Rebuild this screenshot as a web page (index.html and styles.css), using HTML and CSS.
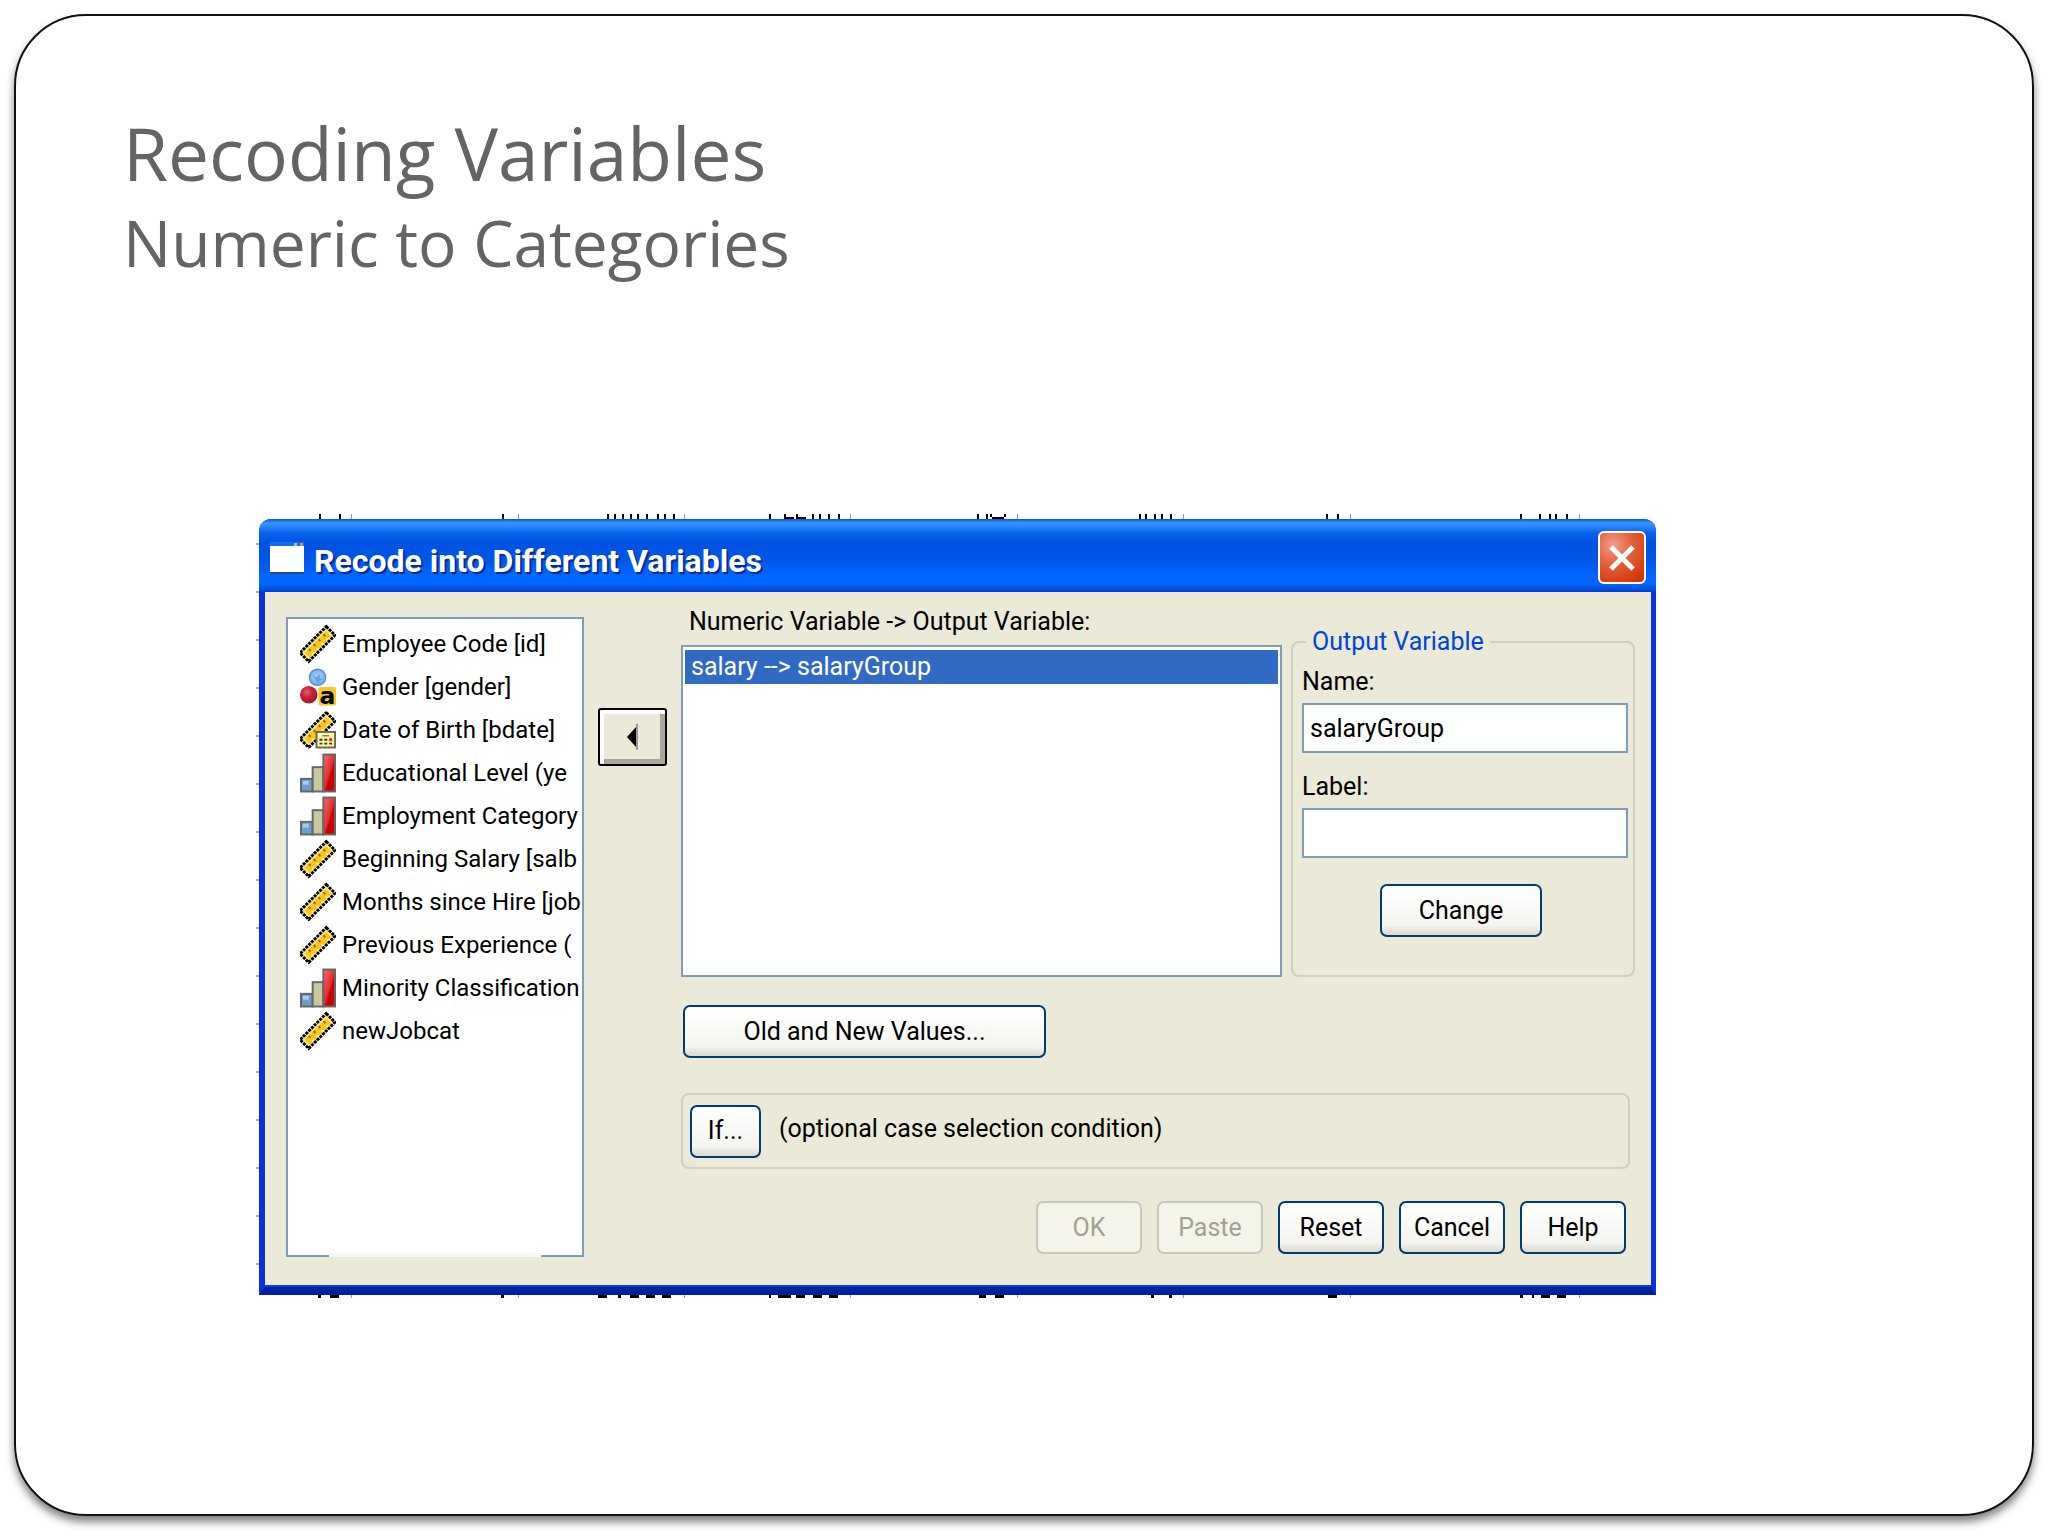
FILE: index.html
```
<!DOCTYPE html>
<html lang="en">
<head>
    <meta charset="UTF-8">
    <meta name="viewport" content="width=device-width, initial-scale=1.0">
    <title>Recoding Variables</title>
    <link rel="stylesheet" href="styles.css">
</head>
<body>

<!-- icon shapes used by the variable list -->
<svg class="defs" aria-hidden="true">
    <linearGradient id="redBar" x1="0" y1="0" x2="1" y2="1">
        <stop offset="0" stop-color="#ff6a6a"/>
        <stop offset="0.5" stop-color="#e03030"/>
        <stop offset="0.6" stop-color="#c80000"/>
        <stop offset="1" stop-color="#d00808"/>
    </linearGradient>
    <radialGradient id="redBall" cx="0.4" cy="0.35" r="0.65">
        <stop offset="0" stop-color="#e86070"/>
        <stop offset="0.5" stop-color="#c42035"/>
        <stop offset="1" stop-color="#a01830"/>
    </radialGradient>
    <radialGradient id="blueBall" cx="0.5" cy="0.5" r="0.5">
        <stop offset="0" stop-color="#a4d4ff"/>
        <stop offset="0.7" stop-color="#84bcf8"/>
        <stop offset="1" stop-color="#4a7cc8"/>
    </radialGradient>
    <symbol id="scale" viewBox="0 0 37 38">
        <path d="M27 1L36 10L9 37L0 28Z" fill="#f4e48a"/>
        <path d="M27 6L32 11L10 33L5 28Z" fill="#fcc414"/>
        <path d="M24 9l2 2M19 14l2 2M14 19l2 2M9 24l2 2" stroke="#8a7030" stroke-width="2"/>
        <path d="M27 14h3M22 19h3M17 24h3M12 29h3" stroke="#fff4b0" stroke-width="2"/>
        <path d="M27 1L36 10L9 37L0 28Z" fill="none" stroke="#000" stroke-width="3" stroke-dasharray="3 1"/>
    </symbol>
    <symbol id="date" viewBox="0 0 37 38">
        <use href="#scale" width="37" height="38"/>
        <rect x="17" y="21" width="19" height="16" fill="#fff8a0" stroke="#6a6a5a" stroke-width="2"/>
        <path d="M23 25h7" stroke="#444" stroke-width="1"/>
        <path d="M20 29h3M25 29h3M20 33h3M25 33h3M30 33h3" stroke="#333" stroke-width="2"/>
        <path d="M30 29h3" stroke="#e02010" stroke-width="3"/>
    </symbol>
    <symbol id="ordinal" viewBox="0 0 37 40">
        <rect x="1" y="26" width="12" height="13" fill="#6c9fd0" stroke="#666" stroke-width="2"/>
        <path d="M3 28h6v4H3z" fill="#a8cdf0"/>
        <rect x="13" y="14" width="11" height="25" fill="#c8c89c" stroke="#666" stroke-width="2"/>
        <rect x="24" y="1" width="12" height="38" fill="url(#redBar)" stroke="#666" stroke-width="2"/>
    </symbol>
</svg>

<main class="slide">
    <header class="heading">
        <h1>Recoding Variables</h1>
        <h2>Numeric to Categories</h2>
    </header>

    <div class="stage">
        <section class="dialog" aria-labelledby="dialogTitle">
            <!-- rows of the data sheet that stick out behind the window -->
            <svg class="sheet sheet-top" viewBox="259 0 1397 5" preserveAspectRatio="none" aria-hidden="true">
                <path d="M319 0h2v5h-2zM339 0h2v5h-2zM502 0h2v5h-2zM607 0h2v5h-2zM614 0h2v5h-2zM622 0h2v5h-2zM630 0h2v5h-2zM637 0h2v5h-2zM646 0h2v5h-2zM657 0h2v5h-2zM664 0h2v5h-2zM673 0h2v5h-2zM769 0h2v5h-2zM784 0h2v3h8v2h-10zM796 0h2v3h8v2h-10zM812 0h2v5h-2zM819 0h2v5h-2zM828 0h2v5h-2zM838 0h2v5h-2zM977 0h2v5h-2zM986 0h2v5h-2zM992 3h12v2h-12zM990 0h2v3h-2zM1004 0h2v3h-2zM1139 0h2v5h-2zM1145 0h2v5h-2zM1154 0h2v5h-2zM1161 0h2v5h-2zM1170 0h2v5h-2zM1326 0h2v5h-2zM1337 0h2v5h-2zM1520 0h2v5h-2zM1539 0h2v5h-2zM1549 0h2v5h-2zM1555 0h2v5h-2zM1566 0h2v5h-2z"/>
                <path fill="#999" d="M351 0h1v5h-1zM518 0h1v5h-1zM684 0h1v5h-1zM850 0h1v5h-1zM1017 0h1v5h-1zM1183 0h1v5h-1zM1350 0h1v5h-1zM1579 0h1v5h-1z"/>
            </svg>
            <svg class="sheet sheet-bottom" viewBox="259 0 1397 3" preserveAspectRatio="none" aria-hidden="true">
                <path d="M318 0h3v3h-3zM330 0h9v3h-9zM501 0h3v3h-3zM598 0h9v3h-9zM618 0h3v3h-3zM630 0h9v3h-9zM646 0h9v3h-9zM662 0h9v3h-9zM769 0h2v3h-2zM778 0h13v3h-13zM796 0h9v3h-9zM813 0h9v3h-9zM829 0h9v3h-9zM979 0h7v3h-7zM995 0h9v3h-9zM1151 0h3v3h-3zM1169 0h3v3h-3zM1328 0h9v3h-9zM1520 0h3v3h-3zM1532 0h2v3h-2zM1541 0h9v3h-9zM1557 0h9v3h-9z"/>
                <path fill="#99b" d="M351 0h1v3h-1zM518 0h1v3h-1zM684 0h1v3h-1zM850 0h1v3h-1zM1017 0h1v3h-1zM1183 0h1v3h-1zM1350 0h1v3h-1zM1579 0h1v3h-1z"/>
            </svg>

            <div class="titlebar">
                <svg class="app-icon" viewBox="0 0 34 32" aria-hidden="true">
                    <path fill="#1470e0" d="M0 0h34v4H0z"/>
                    <path fill="#f08040" d="M30 1h3v3h-3z"/>
                    <path fill="#8cc0f8" d="M24 1h3v3h-3z"/>
                    <path fill="#fff" d="M0 4h34v26H0z"/>
                    <path fill="#234a8c" d="M1 30h33v2H1z"/>
                </svg>
                <h3 id="dialogTitle">Recode into Different Variables</h3>
                <button type="button" class="close" aria-label="Close">
                    <svg viewBox="0 0 28 28" aria-hidden="true"><path d="M3 3L25 25M25 3L3 25" stroke="#fff" stroke-width="5"/></svg>
                </button>
            </div>

            <form class="body">
                <ul class="variables">
                    <li><svg><use href="#scale"/></svg>Employee Code [id]</li>
                    <li>
                        <svg viewBox="0 0 37 38">
                            <circle cx="18" cy="9" r="9" fill="url(#blueBall)"/>
                            <path d="M13 7l4 2 3-3 1 4 3 1-4 2-2 3-2-4z" fill="#6aa4e4"/>
                            <circle cx="9" cy="27" r="9" fill="url(#redBall)"/>
                            <rect x="19" y="19" width="18" height="19" rx="2" fill="#f8c81c"/>
                            <text x="20" y="36" class="icon-letter">a</text>
                        </svg>Gender [gender]
                    </li>
                    <li><svg><use href="#date"/></svg>Date of Birth [bdate]</li>
                    <li><svg><use href="#ordinal"/></svg>Educational Level (ye</li>
                    <li><svg><use href="#ordinal"/></svg>Employment Category</li>
                    <li><svg><use href="#scale"/></svg>Beginning Salary [salb</li>
                    <li><svg><use href="#scale"/></svg>Months since Hire [job</li>
                    <li><svg><use href="#scale"/></svg>Previous Experience (</li>
                    <li><svg><use href="#ordinal"/></svg>Minority Classification</li>
                    <li><svg><use href="#scale"/></svg>newJobcat</li>
                </ul>

                <button type="button" class="move" aria-label="Move variable">
                    <svg viewBox="0 0 12 28" aria-hidden="true"><path d="M10 1v26" stroke="#999" stroke-width="2"/><path d="M0 14L9 4V24Z"/></svg>
                </button>

                <div class="settings">
                    <div class="top-row">
                        <div class="recode">
                            <p id="recodeLabel">Numeric Variable -&gt; Output Variable:</p>
                            <ul class="recode-list" aria-labelledby="recodeLabel">
                                <li>salary --&gt; salaryGroup</li>
                            </ul>
                        </div>
                        <fieldset class="output">
                            <legend>Output Variable</legend>
                            <label for="name">Name:</label>
                            <input type="text" id="name" name="name" value="salaryGroup">
                            <label for="label">Label:</label>
                            <input type="text" id="label" name="label">
                            <button type="button" class="btn change">Change</button>
                        </fieldset>
                    </div>

                    <button type="button" class="btn values">Old and New Values...</button>

                    <div class="condition">
                        <button type="button" class="btn if">If...</button>
                        <span>(optional case selection condition)</span>
                    </div>

                    <div class="actions">
                        <button type="submit" class="btn" disabled>OK</button>
                        <button type="button" class="btn" disabled>Paste</button>
                        <button type="reset" class="btn">Reset</button>
                        <button type="button" class="btn">Cancel</button>
                        <button type="button" class="btn">Help</button>
                    </div>
                </div>
            </form>
        </section>
    </div>
</main>

</body>
</html>
```
FILE: styles.css
```
* {
    box-sizing: border-box;
}
body {
    margin: 0;
    padding: 14px 14px 20px;
    min-height: 100vh;
    display: flex;
    background-color: #fff;
    font-family: Roboto, "Liberation Sans", sans-serif;
    font-size: 25px;
    line-height: 34px;
    color: #000;
}
h1, h2, h3, p, ul {
    margin: 0;
    padding: 0;
}
ul {
    list-style: none;
}
.defs {
    position: absolute;
    width: 0;
    height: 0;
}
.icon-letter {
    font-family: "DejaVu Sans", sans-serif;
    font-size: 24px;
    font-weight: bold;
}

/* slide */
.slide {
    flex: 1;
    border: 2px solid #111;
    border-radius: 72px;
    box-shadow: 0 6px 8px rgba(0, 0, 0, 0.5);
}
.heading {
    padding: 91px 107px 0;
    font-family: "Open Sans", sans-serif;
    color: #666462;
}
.heading h1 {
    font-size: 73px;
    font-weight: normal;
    line-height: 92px;
}
.heading h2 {
    font-size: 64px;
    font-weight: normal;
    line-height: 88px;
}
.stage {
    display: grid;
    grid-template-columns: 243fr 1397fr 376fr;
    padding-top: 232px;
}

/* dialog window */
.dialog {
    position: relative;
    grid-column: 2;
    background-color: #ebe9d8;
    border: solid #0831d9;
    border-width: 0 5px 8px 6px;
    border-bottom-color: #001ea0;
    border-radius: 12px 12px 0 0;
    box-shadow: inset 0 -2px 0 #0046d5;
}
.dialog::before {
    content: "";
    position: absolute;
    left: -9px;
    top: 24px;
    bottom: 0;
    width: 3px;
    background: repeating-linear-gradient(#aaa 0 2px, transparent 2px 48px);
}
.sheet {
    position: absolute;
    left: -6px;
    width: calc(100% + 11px);
}
.sheet-top {
    top: -5px;
    height: 5px;
}
.sheet-bottom {
    bottom: -11px;
    height: 3px;
}
.titlebar {
    display: flex;
    align-items: center;
    gap: 10px;
    height: 73px;
    margin: 0 -5px 0 -6px;
    padding: 4px 10px 0 11px;
    border-radius: 12px 12px 0 0;
    background: linear-gradient(#0a50d8 0, #3c96ff 4px, #2a88fc 7px, #0862ec 14px, #0053e1 24px, #0055e6 40px, #0066ff 56px, #0066ff 65px, #0050e0 70px, #003dd0 73px);
}
.app-icon {
    width: 34px;
    height: 32px;
}
.titlebar h3 {
    flex: 1;
    padding-top: 6px;
    font-size: 32px;
    line-height: 40px;
    color: #fff;
    text-shadow: 2px 2px 0 #0a2a90;
}
.close {
    display: flex;
    align-items: center;
    justify-content: center;
    width: 48px;
    height: 53px;
    padding: 0;
    border: 2px solid #fff;
    border-radius: 6px;
    background: radial-gradient(circle at 30% 25%, #f0a088 0, #e4603c 40%, #d83c10 80%, #b83008 100%);
}
.close svg {
    width: 28px;
    height: 28px;
}
.body {
    display: flex;
    align-items: flex-start;
    gap: 14px;
    padding: 13px 16px 30px 21px;
}

/* source variable list */
.variables {
    position: relative;
    align-self: stretch;
    flex: none;
    width: 298px;
    margin-top: 12px;
    padding: 3px 2px 0 12px;
    border: 2px solid #7f9db9;
    background-color: #fff;
    font-size: 24px;
}
.variables::after {
    content: "";
    position: absolute;
    left: 14%;
    right: 14%;
    bottom: -2px;
    height: 4px;
    background-color: #f8f8f4;
}
.variables li {
    display: flex;
    align-items: center;
    gap: 6px;
    height: 43px;
    white-space: nowrap;
    overflow: hidden;
}
.variables svg {
    flex: none;
    width: 36px;
    height: 40px;
}
.move {
    display: flex;
    align-items: center;
    justify-content: center;
    flex: none;
    width: 69px;
    height: 58px;
    margin-top: 103px;
    padding: 0;
    border: 2px solid #000;
    border-radius: 3px;
    background-color: #ebe9d8;
    box-shadow: inset 4px 4px 0 #fff, inset -5px -5px 0 #aca899;
}
.move svg {
    width: 12px;
    height: 28px;
}

/* right side */
.settings {
    flex: 1;
    min-width: 0;
}
.top-row {
    display: flex;
    gap: 9px;
}
.recode {
    flex: 1;
    display: flex;
    flex-direction: column;
}
.recode p {
    margin: 0 8px 6px;
}
.recode-list {
    flex: 1;
    padding: 3px 2px;
    border: 2px solid #7f9db9;
    background-color: #fff;
}
.recode-list li {
    padding-left: 6px;
    background-color: #316ac5;
    color: #fff;
}
.output {
    width: 344px;
    margin: 20px 0 0;
    padding: 6px 5px 38px 9px;
    border: 2px solid #d0d0bf;
    border-radius: 8px;
}
.output legend {
    margin-left: 4px;
    padding: 0 6px;
    color: #0046d5;
}
.output label {
    display: block;
    margin-bottom: 4px;
}
.output input {
    display: block;
    width: 100%;
    height: 50px;
    margin-bottom: 17px;
    padding: 0 6px;
    border: 2px solid #7f9db9;
    background-color: #fff;
    font: inherit;
}
.btn {
    width: 106px;
    height: 53px;
    padding: 0;
    border: 2px solid #003c74;
    border-radius: 7px;
    background: linear-gradient(#fff, #f4f4f0 80%, #dcd8cc);
    font: inherit;
    color: #000;
}
.btn:disabled {
    border-color: #c9c7ba;
    background: #f5f4ea;
    color: #a1a192;
}
.change {
    display: block;
    width: 162px;
    margin: 26px 0 0 78px;
}
.values {
    display: block;
    width: 363px;
    margin: 28px 0 35px 2px;
}
.condition {
    display: flex;
    align-items: center;
    gap: 18px;
    height: 76px;
    margin-right: 5px;
    padding-left: 7px;
    border: 2px solid #d0d0bf;
    border-radius: 8px;
}
.condition span {
    padding-bottom: 4px;
}
.if {
    width: 71px;
}
.actions {
    display: flex;
    justify-content: flex-end;
    gap: 15px;
    margin: 32px 9px 3px 0;
}
```
